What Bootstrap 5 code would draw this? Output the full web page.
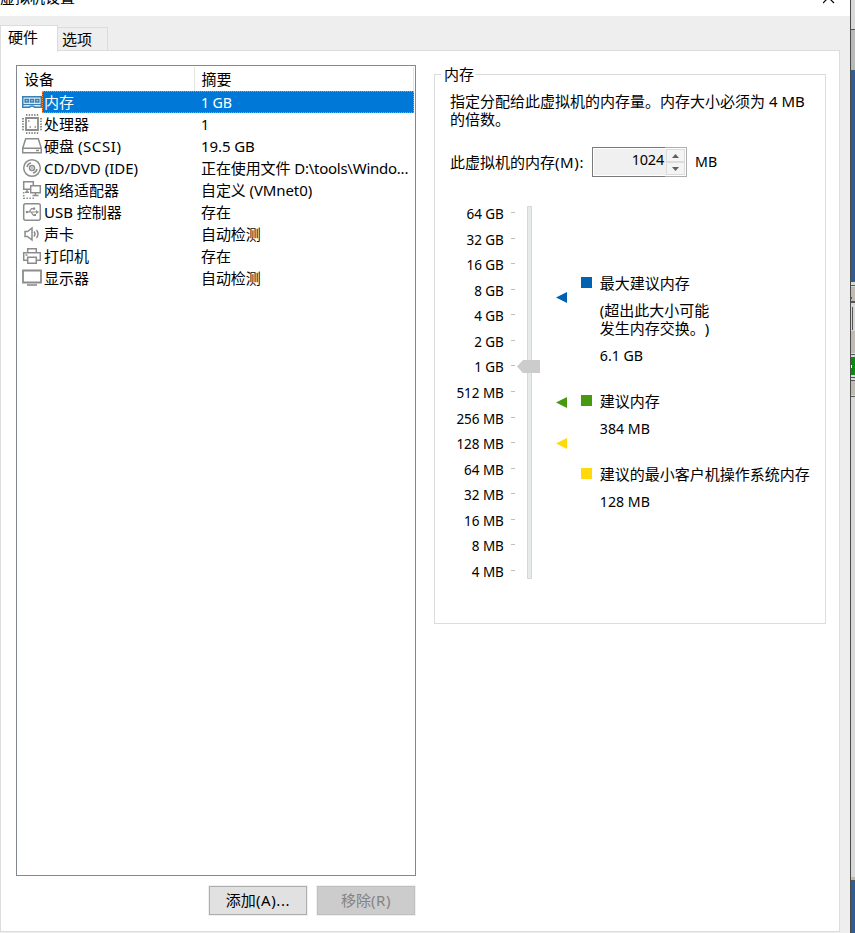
<!DOCTYPE html>
<html lang="zh-CN">
<head>
<meta charset="utf-8">
<title>虚拟机设置</title>
<link href="https://cdn.jsdelivr.net/npm/bootstrap@5.3.0/dist/css/bootstrap.min.css" rel="stylesheet">
<style>
body{width:855px;height:933px;overflow:hidden;background:#eee;color:#000;font:15px/18px "Noto Sans","Noto Sans CJK SC",sans-serif;font-synthesis:none;text-spacing-trim:space-all}
.win{width:850px;height:933px}
.titlebar{height:16px;background:#fff}
.titlebar .cap{line-height:18px;margin-top:-12px}
.titlebar svg{margin:-7px 15px 0 0}
.tabs{height:35px;padding-top:9px}
.tab-a{width:58px;height:27px;background:#fff;border:1px solid #dcdcdc;border-bottom:0;padding:2px 0 0 7px;margin-bottom:-1px;z-index:1}
.tab-b{width:50px;height:24px;border:1px solid #dcdcdc;border-left:0;border-bottom:0;padding:2px 0 0 4px}
.pane{width:840px;height:882px;margin-top:-1px;background:#fff;border:1px solid #dcdcdc;padding:14px 13px 0 15px}
.devs{width:400px;height:811px;border:1px solid #828790;background:#fff}
.hd{height:25px;line-height:24px;padding:0 1px}
.hd .c1{width:177px;padding-left:6px;border-right:1px solid #e5e5e5;margin-top:1px}
.hd .c2{width:220px;padding-left:7px;border-right:1px solid #e5e5e5;margin-top:1px}
.dev{height:22px;line-height:22px;padding:0 1px 0 5px;white-space:nowrap}
.dev svg{width:20px;height:20px;margin:1px 0 1px 0;flex:none;fill:none;stroke:#8c8c8c;stroke-width:1.5}
.dev .mem{stroke:#3c7fb1}
.cells{width:372px;border:1px dotted transparent;line-height:21px}
.cells .n{width:158px;padding-left:1px}
.cells .s{letter-spacing:-.1px}
.wide{letter-spacing:.6px}
.tight{letter-spacing:-.25px}
.sel .cells{background:#0078d7;border-color:#ff8728;color:#fff}
.acts{gap:10px;padding:10px 1px 0 0}
.btn-w{width:98px;height:29px;border:1px solid #adadad;border-radius:0;background:#e1e1e1;font-size:15px;line-height:18px;padding:3px 0 5px;color:#000;box-shadow:0 0 0 1px #f0f0f0}
.btn-w:disabled{background:#ccc;border-color:#bfbfbf;color:#838383;opacity:1}
.grp{width:392px;height:550px;margin-top:9px;border:1px solid #dcdcdc;padding:0 15px}
.grp .lg{width:34px;height:18px;margin:-10px 0 0 -9px;padding-left:3px;background:#fff}
.desc{margin-top:9px;width:365px}
.desc p{height:18px;margin:0;white-space:nowrap}
.memrow{margin-top:19px;height:30px}
.spin{width:95px;height:30px;border:1px solid #7a7a7a;background:#f0f0f0;box-shadow:inset 0 0 0 1px #fff;margin-left:8px}
.spin .v{width:71px;padding-top:2px;text-align:right;font-size:14.5px;letter-spacing:-.2px}
.spin .ud{width:22px;margin:-1px -1px -1px 0;border:1px solid #adadad;border-left:0;padding:1px}
.ud span{height:13px;border:1px solid #dcdcdc;background:#f4f4f4}
.sc{margin-top:23px;height:390px}
.labs{width:54px;padding-top:3px;font-size:13.5px;text-align:right;letter-spacing:-.05px}
.labs div{height:25.57px;line-height:25.57px}
.labs,.tick{margin-top:-1px}
.tick{width:19px;padding-top:1px}
.tick div{height:25.57px}
.tick div::after{content:"";width:4px;height:1px;background:#bebebe;display:block;position:relative;top:12px;left:7px}
.track{margin-left:-6px}
.leg{width:230px;padding-top:74px;margin-left:6px}
.leg p{margin:0}
.g1{margin-top:9px!important}
.num.g1{margin-top:10px!important}
.g2{margin-top:27px}
.sq{width:11px;height:11px;flex:none;margin:3px 8px 0 0}
.c-max{background:#0063b1}.c-rec{background:#459a10}.c-min{background:#ffd90a}
.in{padding-left:19px}
.bg{width:5px;height:933px}
.num{font-size:14.2px}
</style>
<script src="https://cdn.jsdelivr.net/npm/bootstrap@5.3.0/dist/js/bootstrap.bundle.min.js"></script>
</head>
<body class="d-flex">
<div class="win flex-shrink-0 overflow-hidden">
 <div class="titlebar d-flex justify-content-between overflow-hidden"><div class="cap">虚拟机设置</div>
  <svg width="12" height="12" stroke="#000" stroke-width="1.2"><path d="M0 -1L11 10M11 -1L0 10"/></svg></div>
 <div class="tabs d-flex align-items-end"><div class="tab-a position-relative">硬件</div><div class="tab-b">选项</div></div>
 <div class="pane d-flex justify-content-between">
  <div>
   <div class="devs">
    <div class="hd d-flex"><div class="c1">设备</div><div class="c2">摘要</div></div>
    <div class="dev d-flex sel"><svg class="mem" viewBox="0 0 20 20"><path fill="#d7ebf9" d="M.7 4.700h18.600v10.600H12.500l-1-1h-3l-1 1H.7z"/><path d="M3.200 7.500h3v2.500h-3zM8.500 7.500h3v2.500h-3zM13.800 7.500h3v2.500h-3z"/><path d="M1 12.500h18" stroke-width="1"/></svg><div class="cells d-flex"><div class="n">内存</div><div class="s num">1 GB</div></div></div>
    <div class="dev d-flex"><svg viewBox="0 0 20 20"><path d="M4 4h12v12H4z" stroke-width="1.800"/><path stroke-dasharray="1.400 1.300" stroke-width="2" d="M4 1h12.500M4 19h12.500M1 4v12.500M19 4v12.500"/><path stroke-width="1.500" d="M6 7h1.500M12.500 13H14M7.500 13H9"/></svg><div class="cells d-flex"><div class="n">处理器</div><div class="s num">1</div></div></div>
    <div class="dev d-flex"><svg viewBox="0 0 20 20"><path d="M3.700 2.700h12.600l3 9.500v4.600H.7v-4.600zM.7 12.200h18.600M14 14.500h3"/></svg><div class="cells d-flex"><div class="n">硬盘 <span class="wide">(SCSI)</span></div><div class="s">19.5 GB</div></div></div>
    <div class="dev d-flex"><svg viewBox="0 0 20 20"><circle cx="10" cy="10" r="8.300"/><circle cx="10" cy="10" r="2.500"/><path d="M10 9.300v1.400M5 9a5 5 0 0 1 4-4M15 11a5 5 0 0 1-4 4"/></svg><div class="cells d-flex"><div class="n">CD/DVD (IDE)</div><div class="s">正在使用文件 <span class="tight">D:\tools\Windo...</span></div></div></div>
    <div class="dev d-flex"><svg viewBox="0 0 20 20"><path d="M8 9.300H1.700V1.700h9.600V5M5 9.500v3M3 12.300h4M8.700 5.700h9.600v7H8.700zM13.500 13v3M10.500 15.500h6"/><path stroke-dasharray="1.500 1.500" d="M1.700 12v6.300H13"/></svg><div class="cells d-flex"><div class="n">网络适配器</div><div class="s">自定义 (VMnet0)</div></div></div>
    <div class="dev d-flex"><svg viewBox="0 0 20 20"><rect x="1.700" y="1.700" width="16.600" height="16.600" rx="2"/><path d="M5 10h10M7 10l2.500-3.300H12M9 10l2.500 3.300H13" stroke-width="1.200"/><circle cx="5" cy="10" r="1.300" fill="#8c8c8c" stroke="none"/><path d="M14 8l3 2-3 2zM11 5.500h2.200v2.200H11zM12 12h2v2h-2z" fill="#8c8c8c" stroke="none"/></svg><div class="cells d-flex"><div class="n">USB 控制器</div><div class="s">存在</div></div></div>
    <div class="dev d-flex"><svg viewBox="0 0 20 20"><path d="M3 7.500h2.500L10 4v12l-4.500-3.500H3zM12 7.500q2 2.500 0 5M14.500 6q3 4 0 8"/></svg><div class="cells d-flex"><div class="n">声卡</div><div class="s">自动检测</div></div></div>
    <div class="dev d-flex"><svg viewBox="0 0 20 20"><path d="M5.700 6.500V2.700h8.600v3.800M5 14.300H1.700V6.700h16.600v7.600H15M5.700 11.200h8.600v6.100H5.700zM3.500 9h2"/></svg><div class="cells d-flex"><div class="n">打印机</div><div class="s">存在</div></div></div>
    <div class="dev d-flex"><svg viewBox="0 0 20 20"><path d="M1 2.500h18v12H1z" stroke-width="1.800"/><path d="M5 17h10" stroke-width="1.600"/></svg><div class="cells d-flex"><div class="n">显示器</div><div class="s">自动检测</div></div></div>
   </div>
   <div class="acts d-flex justify-content-end"><button class="btn-w">添加<span class="wide">(A)...</span></button><button class="btn-w" disabled>移除<span class="wide">(R)</span></button></div>
  </div>
  <div class="grp">
   <div class="lg">内存</div>
   <div class="desc"><p>指定分配给此虚拟机的内存量。内存大小必须为 4 MB</p><p>的倍数。</p></div>
   <div class="memrow d-flex align-items-center"><div>此虚拟机的内存<span class="wide">(M):</span></div>
    <div class="spin d-flex justify-content-between"><div class="v">1024</div><div class="ud d-flex flex-column"><span class="d-flex align-items-center justify-content-center"><svg width="7" height="4"><path d="M0 4L3.500 0 7 4z" fill="#606060"/></svg></span><span class="d-flex align-items-center justify-content-center"><svg width="7" height="4"><path d="M0 0h7L3.500 4z" fill="#606060"/></svg></span></div></div>
    <div class="ms-2 num">MB</div></div>
   <div class="sc d-flex">
    <div class="labs"><div>64 GB</div><div>32 GB</div><div>16 GB</div><div>8 GB</div><div>4 GB</div><div>2 GB</div><div>1 GB</div><div>512 MB</div><div>256 MB</div><div>128 MB</div><div>64 MB</div><div>32 MB</div><div>16 MB</div><div>8 MB</div><div>4 MB</div></div>
    <div class="tick"><div></div><div></div><div></div><div></div><div></div><div></div><div></div><div></div><div></div><div></div><div></div><div></div><div></div><div></div><div></div></div>
    <svg class="track flex-shrink-0" width="58" height="390"><path d="M10.500 6.500h4v372h-4z" fill="#e7eaea" stroke="#d6d6d6"/><path d="M0 166.500l6-6.500h17v13H6z" fill="#ccc"/><path d="M39 97.500l11-5.500v11z" fill="#0063b1"/><path d="M39 202.500l11-5.500v11z" fill="#459a10"/><path d="M39 243.500l11-5.500v11z" fill="#ffd90a"/></svg>
    <div class="leg">
     <div class="d-flex"><i class="sq c-max"></i><p>最大建议内存</p></div>
     <p class="in g1">(超出此大小可能<br>发生内存交换。)</p><p class="in num g1">6.1 GB</p>
     <div class="d-flex g2"><i class="sq c-rec"></i><p>建议内存</p></div>
     <p class="in num g1">384 MB</p>
     <div class="d-flex g2"><i class="sq c-min"></i><p class="text-nowrap">建议的最小客户机操作系统内存</p></div>
     <p class="in num g1">128 MB</p>
    </div>
   </div>
  </div>
 </div>
</div>
<svg class="bg flex-shrink-0" width="5" height="933" shape-rendering="crispEdges"><path fill="#d8d8d8" d="M0 0h5v933H0z"/><path fill="#b9b9b9" d="M0 30h5v40H0z"/><path fill="#2f5d90" d="M0 70h5v212H0zM0 881h5v52H0z"/><path fill="#bfbbb0" d="M0 287h5v14H0zM0 331h5v22H0zM0 381h5v14H0zM0 877h5v3H0z"/><path fill="#555" d="M0 29h5v1H0zM0 285h5v1H0zM0 301h5v2H0zM2 307h1v23H2zM0 354h5v1H0zM0 377h5v1H0zM0 380h5v1H0zM0 396h5v1H0zM0 880h5v1H0zM0 297h2v2H0z"/><path fill="#0b8a10" d="M0 357h5v18H0z"/><path fill="#fff" d="M0 365h2v3H0z"/><path fill="#4a4a4a" d="M0 0h1v933H0z"/></svg>
</body>
</html>
